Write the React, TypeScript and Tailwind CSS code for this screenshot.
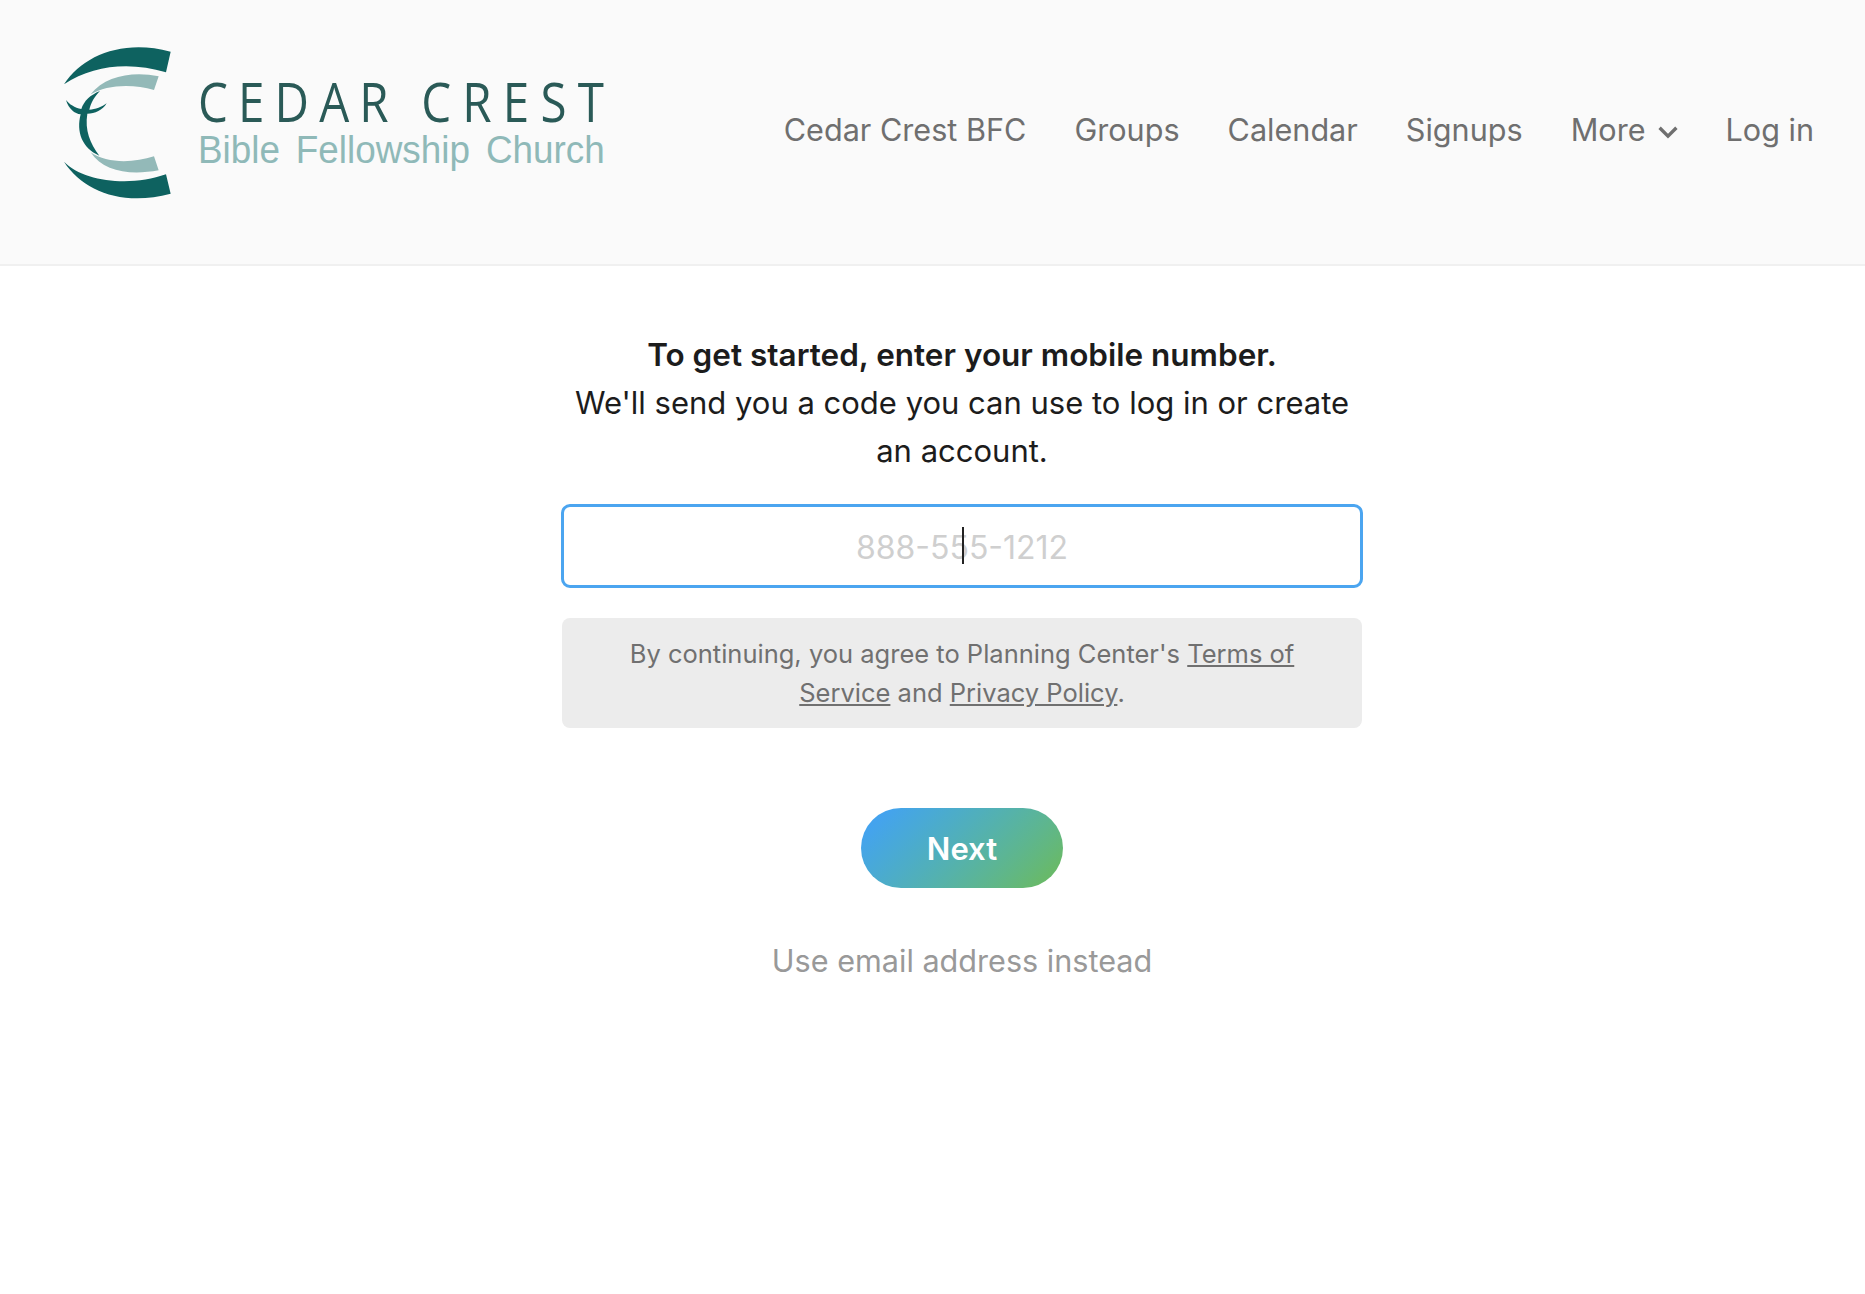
const navLinks = ["Cedar Crest BFC", "Groups", "Calendar", "Signups"];

function Logo() {
  return (
    <svg viewBox="0 0 450 525" className="w-[150px] h-[175px] shrink-0">
      <path d="M72 148C130 60 250 12 392 50L378 112C270 80 160 90 72 148Z" fill="#0e6260" />
      <path d="M152 178C195 122 280 108 356 124L342 165C280 146 200 148 152 178Z" fill="#93b9b8" />
      <path
        d="M180 168C150 180 132 198 124 222C104 218 88 208 78 195C86 222 104 236 122 238C108 290 126 340 178 362C150 325 134 285 142 236C165 236 188 226 200 205C186 216 166 224 148 224C152 204 164 184 180 168Z"
        fill="#0e6260"
      />
      <path d="M152 352C200 386 280 384 342 364L356 406C270 422 190 410 152 352Z" fill="#93b9b8" />
      <path d="M72 380C130 440 270 456 378 418L392 476C250 514 130 470 72 380Z" fill="#0e6260" />
    </svg>
  );
}

export default function App() {
  return (
    <div className="min-h-[1294px] bg-white font-['Inter',sans-serif]">
      <header className="flex justify-between h-[266px] bg-[#fafafa] border-b-2 border-[#f0f0f0] pl-10 pr-[51px] pt-[35px]">
        <div className="flex gap-2">
          <Logo />
          <div className="pt-[39px] w-[410px]">
            <div className="font-['Open_Sans',sans-serif] text-[54px] leading-[54px] tracking-[11.5px] [word-spacing:0px] text-[#2a5a57] whitespace-nowrap origin-left scale-x-[0.88]">
              CEDAR <span className="tracking-[12.7px]">CREST</span>
            </div>
            <div className="font-['Liberation_Sans',sans-serif] text-[39px] leading-[44px] [word-spacing:6px] text-[#8fb9b8] whitespace-nowrap origin-left scale-x-[0.945]">
              Bible Fellowship Church
            </div>
          </div>
        </div>
        <nav className="flex items-center gap-[48px] h-[120px] mt-[35px] text-[30.6px] text-[#6f6f6f]">
          {navLinks.map((label) => (
            <a key={label} href="#">
              {label}
            </a>
          ))}
          <a href="#" className="flex items-center gap-2.5">
            More
            <svg viewBox="0 0 20 20" className="w-6 h-6 mt-1 -mr-0.5" fill="none" stroke="#6f6f6f" strokeWidth="2.8">
              <path d="M3 6.5l7 7 7-7" />
            </svg>
          </a>
          <a href="#">Log in</a>
        </nav>
      </header>

      <main className="ml-[562px] w-[800px] pt-[65px] flex flex-col items-center text-center">
        <div className="text-[31px] leading-[48px] text-[#1c1c1c]">
          <p className="font-semibold text-[31.5px]">To get started, enter your mobile number.</p>
          <p className="w-[790px]">We'll send you a code you can use to log in or create an account.</p>
        </div>

        <div className="relative w-full mt-[29px]">
          <input
            placeholder="888-555-1212"
            className="block -mx-px w-[802px] h-[84px] pt-[2px] rounded-[9px] border-[3px] border-[#4ba5f0] bg-white text-center text-[32px] placeholder:text-[#cfcfcf] outline-none"
          />
          <span className="absolute left-1/2 top-[23px] w-[2px] h-[37px] bg-[#222]" />
        </div>

        <div className="w-full mt-[30px] rounded-lg bg-[#ececec] px-10 py-4 text-[25.5px] leading-[39px] text-[#707070]">
          By continuing, you agree to Planning Center's{" "}
          <a href="#" className="underline">
            Terms of Service
          </a>{" "}
          and{" "}
          <a href="#" className="underline">
            Privacy Policy
          </a>
          .
        </div>

        <button className="mt-20 w-[202px] h-[80px] pt-0.5 rounded-full bg-linear-135 from-[#44a3ee] from-10% to-[#68b96a] to-90% text-white text-[31px] font-semibold">
          Next
        </button>

        <a href="#" className="mt-[54px] text-[30.6px] leading-[38px] text-[#999999]">
          Use email address instead
        </a>
      </main>
    </div>
  );
}
